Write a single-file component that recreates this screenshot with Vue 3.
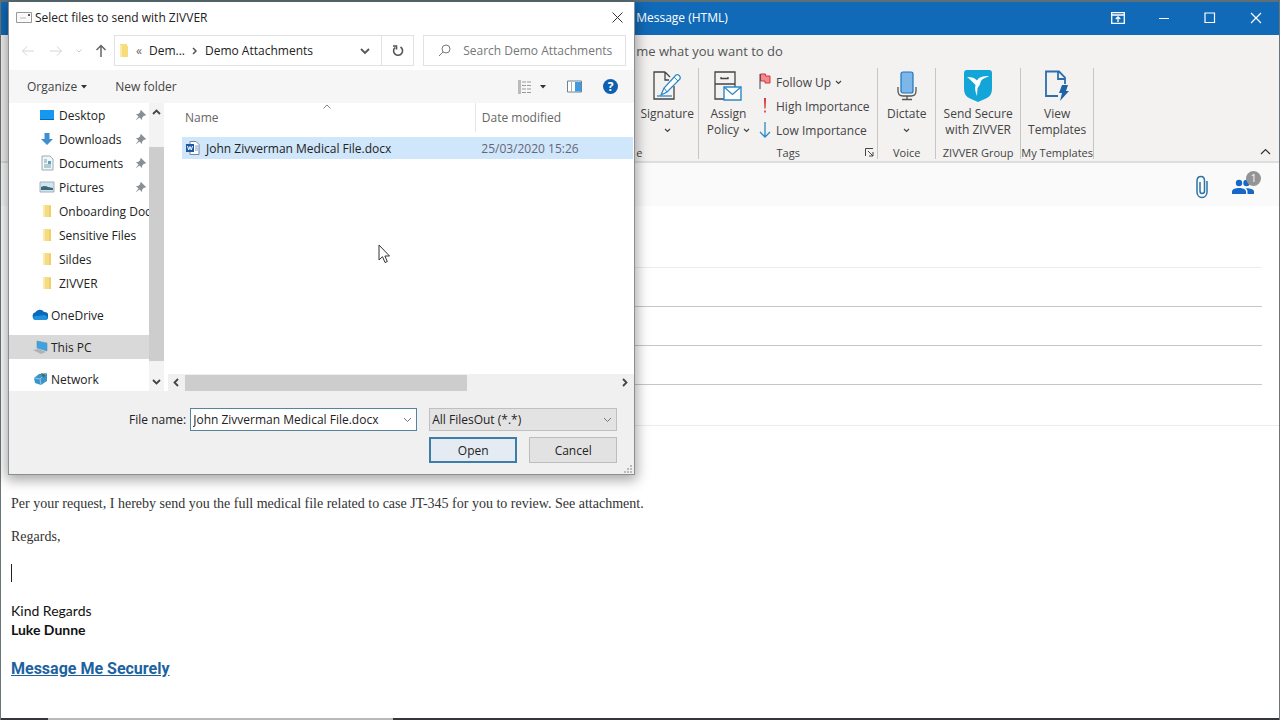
<template>
  <div class="desktop">
    <div class="window">
      <header class="titlebar">
        <span class="window-title">Message (HTML)</span>
        <div class="window-buttons">
          <button aria-label="Ribbon display options">
            <svg width="14" height="12" viewBox="0 0 14 12" fill="none" stroke="#fff" stroke-width="1.3">
              <path d="M.7.7h12.6v10.6H.7zM.7 3h12.6M7 10V5M4.7 7 7 4.8 9.3 7" />
            </svg>
          </button>
          <button aria-label="Minimize">
            <svg width="12" height="12" viewBox="0 0 12 12"><path d="M1 6.5h10" stroke="#fff" /></svg>
          </button>
          <button aria-label="Maximize">
            <svg width="12" height="12" viewBox="0 0 12 12"><path d="M1 1h9.5v9.5H1z" fill="none" stroke="#fff" stroke-width="1.2" /></svg>
          </button>
          <button aria-label="Close">
            <svg width="12" height="12" viewBox="0 0 12 12"><path d="m1 1 10 10M11 1 1 11" stroke="#fff" stroke-width="1.2" /></svg>
          </button>
        </div>
      </header>

      <div class="ribbon">
        <div class="tell-me">me what you want to do</div>
        <div class="groups">
          <section class="group include">
            <div class="tools">
              <button class="tool">
                <svg width="28" height="32" viewBox="0 0 28 32" fill="none">
                  <path d="M12 2H1v27h20V16M12 2l5 5M12 2v8h4" stroke="#444" stroke-width="1.3" />
                  <path d="M4 26h15" stroke="#2b88c8" stroke-width="1.3" />
                  <path d="m8 25 3-7L23 5c2-1 5 1 4 4L14 22z" fill="#fff" stroke="#2b88c8" stroke-width="1.3" />
                  <path d="m11 18 3 4M21 7l4 4" stroke="#2b88c8" />
                </svg>
                <span>Signature</span>
                <span class="line"><svg class="caret" viewBox="0 0 7 5"><path d="m1 1 2.5 2.5L6 1" /></svg></span>
              </button>
            </div>
            <h2>e</h2>
          </section>

          <section class="group tags">
            <div class="tools">
              <button class="tool policy">
                <svg width="30" height="32" viewBox="0 0 30 32" fill="none">
                  <path d="M2 2h20v27H2zM2 14h20M8 7v1.5h7V7" stroke="#444" stroke-width="1.3" />
                  <path d="M11 17h17v13H11z" fill="#fff" stroke="#2b88c8" stroke-width="1.4" />
                  <path d="m11 17 8.5 7.5L28 17" stroke="#2b88c8" stroke-width="1.3" />
                </svg>
                <span>Assign</span>
                <span class="line">Policy <svg class="caret" viewBox="0 0 7 5"><path d="m1 1 2.5 2.5L6 1" /></svg></span>
              </button>
              <div class="tag-list">
                <button>
                  <svg width="14" height="18" viewBox="0 0 14 18">
                    <path d="M2.5 1h5v2H12v7H7V8H2.5z" fill="#f4898c" stroke="#d13438" />
                    <path d="M2 1v15" stroke="#444" />
                  </svg>
                  Follow Up <svg class="caret" viewBox="0 0 7 5"><path d="m1 1 2.5 2.5L6 1" /></svg>
                </button>
                <button>
                  <svg width="14" height="18" viewBox="0 0 14 18"><path d="M6 1h2l-.4 10.5H6.4zM6.2 13.5h1.6v2H6.2z" fill="#d13438" /></svg>
                  High Importance
                </button>
                <button>
                  <svg width="14" height="18" viewBox="0 0 14 18"><path d="M7 1v15M2 11l5 5 5-5" fill="none" stroke="#2b88c8" stroke-width="1.3" /></svg>
                  Low Importance
                </button>
              </div>
            </div>
            <h2>Tags</h2>
            <button class="launcher" aria-label="Tags options">
              <svg width="9" height="9" viewBox="0 0 9 9" fill="none" stroke="#444"><path d="M.5 8V.5H8M3 3l5 5M8 4v4H4" /></svg>
            </button>
          </section>

          <section class="group voice">
            <div class="tools">
              <button class="tool">
                <svg width="20" height="32" viewBox="0 0 20 32">
                  <path d="M1 17v4c0 4 3 5 5 5h8c2 0 5-1 5-5v-4M10 26v3M5 29.5h10" fill="none" stroke="#555" stroke-width="1.3" />
                  <rect x="4" y="2" width="12" height="21" rx="2" fill="#7db7ea" stroke="#1f75bd" stroke-width="1.2" />
                </svg>
                <span>Dictate</span>
                <span class="line"><svg class="caret" viewBox="0 0 7 5"><path d="m1 1 2.5 2.5L6 1" /></svg></span>
              </button>
            </div>
            <h2>Voice</h2>
          </section>

          <section class="group zivver">
            <div class="tools">
              <button class="tool">
                <svg width="28" height="32" viewBox="0 0 28 32">
                  <path d="M3 0h22q3 0 3 3v16q0 7-6 9.5L14 32l-8-3.500Q0 26 0 19V3q0-3 3-3z" fill="#14a5d8" />
                  <path d="M3 7c5 0 8 1 10 3.500C15 7 19 6 25 6c-1.500 1.200-3 1.200-4 2-2.500.8-4 2.500-4.500 4.500-.5 3-2.500 4-3 6L13 26c-1.500-4-2.500-7-1.500-11C9 12 6.500 10 3 7z" fill="#fff" />
                </svg>
                <span>Send Secure</span>
                <span>with ZIVVER</span>
              </button>
            </div>
            <h2>ZIVVER Group</h2>
          </section>

          <section class="group templates">
            <div class="tools">
              <button class="tool">
                <svg width="26" height="32" viewBox="0 0 26 32">
                  <path d="M14 26H2V1.500h13l6 6V14M14 2v7h7" fill="none" stroke="#2a6fae" stroke-width="1.8" />
                  <path d="M18 15h6l-2 6h3l-9 10 2-8h-3z" fill="#1d63a5" />
                </svg>
                <span>View</span>
                <span>Templates</span>
              </button>
            </div>
            <h2>My Templates</h2>
          </section>

          <button class="collapse" aria-label="Collapse the ribbon">
            <svg width="11" height="7" viewBox="0 0 11 7"><path d="m1 6 4.500-4.500L10 6" fill="none" stroke="#333" stroke-width="1.2" /></svg>
          </button>
        </div>
      </div>

      <div class="mail-tools">
        <button aria-label="Attach file">
          <svg width="14" height="24" viewBox="0 0 14 24" fill="none" stroke="#2c73a8" stroke-width="1.5">
            <path d="M12 6v11c0 3-2 5.500-5 5.500S2 20 2 17V6c0-3 1.500-4.500 4-4.500S9.500 3 9.500 6v10c0 1.500-1 2.500-2.500 2.500S5 17.500 5 16V7" />
          </svg>
        </button>
        <button class="people" aria-label="Recipients">
          <svg width="24" height="16" viewBox="0 0 24 16" fill="#1468c7">
            <circle cx="8" cy="4" r="3.200" /><circle cx="15.500" cy="4" r="3.200" />
            <path d="M1 15v-2.500C1 10 5 9 8 9s7 1 7 3.500V15zM16.500 15v-2.500c0-1.500-.7-2.500-1.600-3.300C18 9 23 10 23 12.500V15z" />
          </svg>
          <span class="badge">1</span>
        </button>
      </div>

      <div class="fields">
        <div class="field faint first"></div>
        <div class="field"></div>
        <div class="field"></div>
        <div class="field"></div>
      </div>
      <div class="field faint last"></div>

      <main class="message">
        <p>Per your request, I hereby send you the full medical file related to case JT-345 for you to review. See attachment.</p>
        <p>Regards,</p>
        <div class="text-caret"></div>
        <div class="signature">
          Kind Regards<br />
          <strong>Luke Dunne</strong>
        </div>
        <a class="secure-link" href="#">Message Me Securely</a>
      </main>
      <div class="taskbar"><span></span><span></span><span></span></div>
    </div>

    <form class="dialog" @submit.prevent>
      <div class="dialog-title">
        <svg width="16" height="11" viewBox="0 0 16 11">
          <path d="M.5.5h15v10H.5z" fill="#fafafa" stroke="#999" />
          <path d="M12 2h2v2h-2z" fill="#555" /><path d="M4 6h6" stroke="#bbb" />
        </svg>
        <span>Select files to send with ZIVVER</span>
        <button type="button" aria-label="Close dialog">
          <svg width="11" height="11" viewBox="0 0 11 11"><path d="m.5.5 10 10M10.5.5l-10 10" stroke="#333" /></svg>
        </button>
      </div>

      <div class="address-row">
        <div class="history">
          <button type="button" aria-label="Back"><svg width="14" height="12" viewBox="0 0 14 12"><path d="M13 6H1.500M6 1.500 1.500 6 6 10.500" stroke="#d5d5d5" /></svg></button>
          <button type="button" aria-label="Forward"><svg width="14" height="12" viewBox="0 0 14 12"><path d="M1 6h11.500M8 1.500 12.500 6 8 10.500" stroke="#d5d5d5" /></svg></button>
          <button type="button" aria-label="Recent locations"><svg width="6" height="4" viewBox="0 0 6 4"><path d="m.5.5 2.5 2.5L5.5.5" stroke="#ccc" /></svg></button>
          <button type="button" aria-label="Up"><svg width="12" height="14" viewBox="0 0 12 14"><path d="M6 13V1.500M1.500 6 6 1.500 10.500 6" stroke="#666" stroke-width="1.5" /></svg></button>
        </div>
        <div class="path">
          <svg width="10" height="13" viewBox="0 0 10 13"><path d="M1 0h7v2h1v11H1z" fill="#f7dc7c" /><path d="M1 1h2v12H1z" fill="#fbe9a6" /></svg>
          <span class="chevrons">«</span>
          <span>Dem...</span>
          <svg width="6" height="8" viewBox="0 0 6 8"><path d="m1 1 3 3-3 3" fill="none" stroke="#555" stroke-width="1.5" /></svg>
          <span>Demo Attachments</span>
          <button class="path-open" type="button" aria-label="Previous locations"><svg width="10" height="7" viewBox="0 0 10 7"><path d="m1 1 4 4 4-4" stroke="#555" stroke-width="1.8" /></svg></button>
        </div>
        <button class="refresh" type="button" aria-label="Refresh">
          <svg width="12" height="13" viewBox="0 0 12 13"><path d="M8.500 3A4.500 4.500 0 1 1 3 3.500M1 2h3.500v3.500" stroke="#555" stroke-width="1.6" /></svg>
        </button>
        <label class="search">
          <svg width="13" height="13" viewBox="0 0 13 13"><circle cx="8" cy="5" r="4" fill="none" stroke="#777" /><path d="m5 8-4 4" stroke="#777" /></svg>
          <input v-model="query" type="text" placeholder="Search Demo Attachments" aria-label="Search Demo Attachments" />
        </label>
      </div>

      <div class="toolbar">
        <button type="button">Organize <svg width="6" height="4" viewBox="0 0 6 4"><path class="solid" d="M0 0h6L3 3.500z" /></svg></button>
        <button type="button">New folder</button>
        <div class="view-tools">
          <button type="button" aria-label="Change view">
            <svg width="15" height="14" viewBox="0 0 15 14"><path d="M1 0h3v14H1z" fill="#bbb" /><path d="M5 2h4M10 2h4M5 5.500h4M10 5.500h4M5 9h4M10 9h4M5 12.500h4M10 12.500h4" stroke="#999" /></svg>
            <svg width="6" height="4" viewBox="0 0 6 4"><path class="solid" d="M0 0h6L3 3.500z" /></svg>
          </button>
          <button type="button" aria-label="Show preview pane">
            <svg width="15" height="13" viewBox="0 0 15 13"><path d="M.5 1h14v11H.5z" fill="#fff" stroke="#6b8494" /><path d="M8 2h6v9.500H8z" fill="#3d9ae0" /><path d="M4.500 2v10" stroke="#aaa" /></svg>
          </button>
          <button type="button" class="help" aria-label="Help">?</button>
        </div>
      </div>

      <div class="browser">
        <nav>
          <a v-for="place in places" :key="place.name" href="#" :class="[place.level, { selected: place.name === 'This PC' }]">
            <svg class="place-icon" width="16" height="16" viewBox="0 0 16 16">
              <g v-if="place.icon === 'desktop'"><path d="M1 3h14v10H1z" fill="#1697f0" /><path d="M1 12h14v1H1z" fill="#0b66b1" /></g>
              <path v-else-if="place.icon === 'download'" d="M5.500 2h5v6H14l-6 6-6-6h3.500z" fill="#3f8fd3" />
              <g v-else-if="place.icon === 'document'"><path d="M3 1h8l3 3v11H3z" fill="#f2f6f7" stroke="#9aacb2" /><path d="M5 5h3M5 7h3M5 10h7M5 12h7" stroke="#6fa3ad" /><path d="M9 6h3v3H9z" fill="#5f9fb8" /></g>
              <g v-else-if="place.icon === 'picture'"><path d="M1 3h14v10H1z" fill="#cfe3f2" stroke="#a6b0b6" /><path d="M2 8q4-2 7 0l5 1v2H2z" fill="#3c6878" /></g>
              <g v-else-if="place.icon === 'folder'"><path d="M4 2h8v12H4z" fill="#f5dc83" /><path d="M4 2h2v12H4z" fill="#fae9a9" /><path d="M10 3h2v11h-2z" fill="#efcf68" /></g>
              <g v-else-if="place.icon === 'cloud'"><path d="M4 13a4 4 0 0 1-.5-7.800A5 5 0 0 1 12 5a4 4 0 0 1 1 8z" fill="#0a68b8" /><path d="M1 12q0-4 5-3l6-1q4 1 3.500 3.500Q15 13 13 13H3z" fill="#2091df" /></g>
              <g v-else-if="place.icon === 'pc'"><path d="m5 2 10 2v8L5 9z" fill="#3ba3e4" stroke="#6d8fa5" stroke-width=".6" /><path d="m1 11 5-1 8 3-5 2z" fill="#a8b3ba" /></g>
              <g v-else><path d="m2 7 5-4 8-1v8l-6 4-6-2z" fill="#3d94cb" /><path d="m2 7 6 1 7-6M8 8l1 6" stroke="#8cc8e9" fill="none" /><path d="m9 2 2 5 3-3z" fill="#3e735d" /></g>
            </svg>
            <span>{{ place.name }}</span>
            <svg v-if="place.pinned" class="pin" width="11" height="11" viewBox="0 0 11 11"><path d="m6 0 5 5-1 1-1-.5L7 8v2L4.500 7.500.5 10.500 3.500 6.500 1 4h2l2.500-2L5 1z" fill="#8a8f93" /></svg>
          </a>
        </nav>
        <div class="vscroll">
          <svg width="9" height="6" viewBox="0 0 9 6"><path d="m1 5 3.500-3.500L8 5" /></svg>
          <span class="thumb"></span>
          <svg width="9" height="6" viewBox="0 0 9 6"><path d="m1 1 3.500 3.500L8 1" /></svg>
        </div>
        <div class="files">
          <div class="file-pane">
            <svg class="sort" width="8" height="5" viewBox="0 0 8 5"><path d="M.5 4.500 4 1l3.500 3.500" fill="none" stroke="#888" /></svg>
            <table>
              <thead>
                <tr><th class="name-col">Name</th><th>Date modified</th></tr>
              </thead>
              <tbody>
                <tr v-for="file in files" :key="file.name">
                  <td>
                    <div class="file-name">
                      <svg width="14" height="14" viewBox="0 0 14 14"><path d="M4 .5h6l3 3v10H4z" fill="#fff" stroke="#7588a0" /><path d="M9 5h3M9 7h3M9 9h3" stroke="#7fa0cb" /><path d="M0 3h8v8H0z" fill="#1d58a7" /><path d="m1.500 5 1.200 4L4 5.500 5.300 9l1.200-4" fill="none" stroke="#fff" /></svg>
                      {{ file.name }}
                    </div>
                  </td>
                  <td class="date">{{ file.modified }}</td>
                </tr>
              </tbody>
            </table>
          </div>
          <div class="hscroll">
            <svg width="6" height="9" viewBox="0 0 6 9"><path d="M5 1 1.500 4.500 5 8" /></svg>
            <span class="thumb"></span>
            <svg width="6" height="9" viewBox="0 0 6 9"><path d="m1 1 3.500 3.500L1 8" /></svg>
          </div>
        </div>
      </div>

      <div class="dialog-footer">
        <div class="file-row">
          <label for="file-name">File name:</label>
          <div class="combo">
            <input id="file-name" v-model="fileName" type="text" />
            <svg width="9" height="6" viewBox="0 0 9 6"><path d="m1 1 3.500 3.500L8 1" /></svg>
          </div>
          <div class="combo type">
            <select v-model="fileType" aria-label="File type">
              <option>All FilesOut (*.*)</option>
            </select>
            <svg width="9" height="6" viewBox="0 0 9 6"><path d="m1 1 3.500 3.500L8 1" /></svg>
          </div>
        </div>
        <div class="actions">
          <button class="open" type="submit">Open</button>
          <button type="button">Cancel</button>
        </div>
        <svg class="grip" width="9" height="9" viewBox="0 0 9 9" fill="#bbb"><path d="M6 0h2v2H6zM3 3h2v2H3zM6 3h2v2H6zM0 6h2v2H0zM3 6h2v2H3zM6 6h2v2H6z" /></svg>
      </div>

      <svg class="pointer" width="13" height="20" viewBox="0 0 13 20"><path d="M1 1v15l3.500-3.300L7 18.500l2.300-1L6.900 12H11.500z" fill="#fff" stroke="#333" /></svg>
    </form>
  </div>
</template>

<script setup>
import { ref } from 'vue'

const query = ref('')
const fileName = ref('John Zivverman Medical File.docx')
const fileType = ref('All FilesOut (*.*)')

const places = [
  { name: 'Desktop', icon: 'desktop', level: 'child', pinned: true },
  { name: 'Downloads', icon: 'download', level: 'child', pinned: true },
  { name: 'Documents', icon: 'document', level: 'child', pinned: true },
  { name: 'Pictures', icon: 'picture', level: 'child', pinned: true },
  { name: 'Onboarding Doc', icon: 'folder', level: 'child' },
  { name: 'Sensitive Files', icon: 'folder', level: 'child' },
  { name: 'Sildes', icon: 'folder', level: 'child' },
  { name: 'ZIVVER', icon: 'folder', level: 'child' },
  { name: 'OneDrive', icon: 'cloud', level: 'root' },
  { name: 'This PC', icon: 'pc', level: 'root' },
  { name: 'Network', icon: 'network', level: 'root' }
]

const files = [
  { name: 'John Zivverman Medical File.docx', modified: '25/03/2020 15:26' }
]
</script>

<style>
body {
  margin: 0;
}
</style>

<style scoped>
.desktop {
  --dialog-width: 49vw;
  position: relative;
  min-height: 100vh;
  overflow: hidden;
  font-family: "Open Sans", "Noto Sans", sans-serif;
  font-size: 12px;
  color: #333;
}
.desktop *, .desktop {
  box-sizing: border-box;
}
button, input, select {
  font: inherit;
  color: inherit;
  margin: 0;
  padding: 0;
  border: none;
  background: none;
}
svg {
  flex: none;
}

/* message window */
.window {
  display: flex;
  flex-direction: column;
  min-height: 100vh;
  border: 1px solid #6b7478;
  border-top: 2px solid #5d7078;
  border-bottom: none;
  background: #fff;
}
.titlebar {
  display: flex;
  align-items: center;
  justify-content: space-between;
  height: 33px;
  padding-bottom: 2px;
  padding-left: calc(var(--dialog-width) + 8px);
  background: #116ab8;
  color: #fff;
}
.window-buttons {
  display: flex;
}
.window-buttons button {
  display: flex;
  align-items: center;
  justify-content: center;
  width: 46px;
  height: 30px;
}
.ribbon {
  padding-left: calc(var(--dialog-width) + 8px);
  background: #f3f2f1;
  border-bottom: 2px solid #dededd;
}
.tell-me {
  height: 33px;
  line-height: 32px;
  font-size: 13px;
  color: #555;
}
.groups {
  display: flex;
  padding-bottom: 2px;
}
.group {
  position: relative;
  display: flex;
  flex-direction: column;
  align-items: center;
  height: 91px;
  border-right: 1px solid #c8c6c4;
  color: #444;
}
.include {
  width: 63px;
}
.include h2 {
  align-self: flex-start;
}
.tags {
  width: 179px;
}
.voice {
  width: 58px;
}
.zivver {
  width: 85px;
}
.templates {
  width: 73px;
}
.group h2 {
  margin: auto 0 0;
  font-size: 11px;
  font-weight: normal;
  line-height: 12px;
  white-space: nowrap;
}
.tools {
  display: flex;
  padding-top: 2px;
}
.tool {
  display: flex;
  flex-direction: column;
  align-items: center;
  line-height: 16px;
  white-space: nowrap;
}
.tool > svg {
  margin-bottom: 4px;
}
.line {
  display: flex;
  align-items: center;
  gap: 4px;
  height: 16px;
}
.caret {
  width: 7px;
  height: 5px;
  fill: none;
  stroke: #444;
  stroke-width: 1.2;
}
.policy {
  margin-right: 8px;
}
.tag-list button {
  display: flex;
  align-items: center;
  gap: 4px;
  height: 24px;
  white-space: nowrap;
}
.launcher {
  position: absolute;
  right: 3px;
  bottom: 2px;
  line-height: 9px;
}
.collapse {
  align-self: flex-end;
  margin: 0 8px 0 auto;
}
.mail-tools {
  display: flex;
  align-items: center;
  justify-content: flex-end;
  gap: 22px;
  height: 43px;
  padding-right: 24px;
  padding-top: 4px;
  background: #fafafa;
}
.mail-tools button {
  display: flex;
}
.people {
  position: relative;
}
.badge {
  position: absolute;
  top: -8px;
  right: -6px;
  width: 15px;
  height: 15px;
  border-radius: 50%;
  background: #949494;
  color: #fff;
  font-size: 10px;
  line-height: 15px;
  text-align: center;
}
.fields {
  margin: 0 17px 0 10px;
}
.field {
  height: 39px;
  border-bottom: 1px solid #c6c6c6;
}
.field.first {
  height: 62px;
}
.field.faint {
  border-color: #ececec;
}
.field.last {
  height: 41px;
  margin-left: 10px;
}
.message {
  flex: 1;
  padding: 68px 10px 0;
}
.message p {
  margin: 0 0 13px;
  font-family: "Liberation Serif", serif;
  font-size: 14px;
  line-height: 20px;
}
.text-caret {
  width: 1px;
  height: 18px;
  margin: 17px 0 19px;
  background: #222;
}
.signature {
  font-family: Lato, sans-serif;
  font-size: 14px;
  line-height: 19px;
  color: #111;
}
.secure-link {
  display: inline-block;
  margin-top: 20px;
  font-family: Roboto, sans-serif;
  font-size: 16px;
  font-weight: bold;
  line-height: 20px;
  color: #1c62a0;
}
.taskbar {
  display: flex;
  height: 2px;
  background: #34363c;
}
.taskbar span:first-child {
  width: 47px;
}
.taskbar span:nth-child(2) {
  width: 27%;
  background: #b9b9b9;
}

/* file dialog */
.dialog {
  position: absolute;
  top: 2px;
  left: 8px;
  width: var(--dialog-width);
  min-width: 600px;
  background: #fff;
  border: 1px solid #8b8f91;
  border-top: none;
  box-shadow: 0 3px 12px 2px rgba(0, 0, 0, 0.35);
  color: #222;
}
.dialog button svg {
  fill: none;
}
.dialog .solid {
  fill: #333;
}
.dialog-title {
  display: flex;
  align-items: center;
  gap: 3px;
  height: 32px;
  padding: 0 11px 2px 7px;
}
.dialog-title button {
  display: flex;
  margin-left: auto;
}
.address-row {
  display: flex;
  height: 33px;
  margin-bottom: 3px;
  padding: 1px 8px 1px 12px;
}
.history {
  display: flex;
  align-items: center;
  gap: 14px;
  padding-right: 7px;
}
.history button {
  display: flex;
}
.history button:nth-child(n + 3) {
  margin-left: -1px;
}
.path {
  flex: 1;
  display: flex;
  align-items: center;
  gap: 7px;
  padding: 0 11px 0 4px;
  border: 1px solid #e2e2e2;
  white-space: nowrap;
}
.chevrons {
  color: #666;
}
.path-open {
  margin-left: auto;
}
.refresh {
  display: flex;
  align-items: center;
  justify-content: center;
  width: 32px;
  border: 1px solid #e2e2e2;
  border-left: none;
}
.search {
  display: flex;
  align-items: center;
  gap: 12px;
  width: 203px;
  margin-left: 9px;
  padding-left: 14px;
  border: 1px solid #e2e2e2;
}
.search input {
  flex: 1;
  min-width: 0;
  outline: none;
}
.search input::placeholder {
  color: #777;
  opacity: 1;
}
.toolbar {
  display: flex;
  align-items: center;
  gap: 28px;
  height: 33px;
  padding: 0 16px 0 18px;
  background: #f6f6f7;
  color: #444;
}
.toolbar button {
  display: flex;
  align-items: center;
  gap: 4px;
}
.view-tools {
  display: flex;
  align-items: center;
  gap: 21px;
  margin-left: auto;
}
.view-tools button:first-child {
  gap: 8px;
}
.toolbar .help {
  justify-content: center;
  width: 15px;
  height: 15px;
  border-radius: 50%;
  background: #0f5fb0;
  color: #fff;
  font-weight: bold;
}
.browser {
  display: flex;
  height: 288px;
}
nav {
  width: 140px;
  overflow: hidden;
}
nav a {
  display: flex;
  align-items: center;
  gap: 4px;
  height: 24px;
  padding-right: 3px;
  color: inherit;
  text-decoration: none;
  white-space: nowrap;
}
nav .child {
  padding-left: 30px;
}
nav .root {
  gap: 3px;
  margin-top: 8px;
  padding-left: 23px;
}
nav .selected {
  background: #d9d9d9;
}
.pin {
  margin-left: auto;
}
.vscroll {
  display: flex;
  flex-direction: column;
  align-items: center;
  justify-content: space-between;
  width: 15px;
  padding: 6px 0;
  background: #f3f3f3;
}
.vscroll svg, .hscroll svg {
  fill: none;
  stroke: #444;
  stroke-width: 1.8;
}
.vscroll .thumb {
  width: 15px;
  height: 214px;
  margin-top: 14px;
  background: #cdcdcd;
}
.files {
  flex: 1;
  display: flex;
  flex-direction: column;
  min-width: 0;
  padding-left: 4px;
}
.file-pane {
  position: relative;
  flex: 1;
  padding: 0 1px 0 14px;
}
.sort {
  position: absolute;
  top: 1px;
  left: 155px;
}
table {
  width: 100%;
  border-collapse: collapse;
}
th {
  height: 29px;
  padding: 0 0 0 6px;
  font-weight: normal;
  text-align: left;
  color: #666;
}
.name-col {
  width: 65%;
  padding-left: 3px;
  border-right: 1px solid #e5e5e5;
}
thead::after {
  content: "";
  display: block;
  height: 5px;
}
tbody tr {
  height: 22px;
  background: #cfe6fb;
}
td {
  padding: 0 0 0 4px;
}
.file-name {
  display: flex;
  align-items: center;
  gap: 6px;
  white-space: nowrap;
}
.date {
  padding-left: 6px;
  color: #667;
}
.hscroll {
  display: flex;
  align-items: center;
  height: 17px;
  padding: 0 6px 0 5px;
  background: #f0f0f0;
}
.hscroll .thumb {
  width: 62%;
  height: 16px;
  margin: 0 auto 0 6px;
  background: #cdcdcd;
}
.dialog-footer {
  position: relative;
  display: flex;
  flex-direction: column;
  gap: 6px;
  padding: 17px 17px 11px 0;
  background: #f0f0f0;
}
.file-row {
  display: flex;
  align-items: center;
  gap: 12px;
}
.file-row label {
  flex: 1;
  margin-right: -8px;
  text-align: right;
}
.combo {
  display: flex;
  align-items: center;
  width: 227px;
  height: 23px;
  padding-right: 4px;
  border: 1px solid #55859c;
  background: #fff;
}
.combo input, .combo select {
  flex: 1;
  min-width: 0;
  padding-left: 2px;
  appearance: none;
  outline: none;
}
.combo svg {
  fill: none;
  stroke: #777;
}
.combo.type {
  width: 188px;
  border-color: #bfbfbf;
  background: #e3e3e3;
}
.actions {
  display: flex;
  justify-content: flex-end;
  gap: 12px;
}
.actions button {
  width: 88px;
  height: 26px;
  border: 1px solid #bdbdbd;
  background: #e2e2e2;
}
.actions .open {
  border: 2px solid #3d7da9;
  background: #e4ebf2;
}
.grip {
  position: absolute;
  right: 1px;
  bottom: 0;
}
.pointer {
  position: absolute;
  top: 242px;
  left: 369px;
}
</style>
